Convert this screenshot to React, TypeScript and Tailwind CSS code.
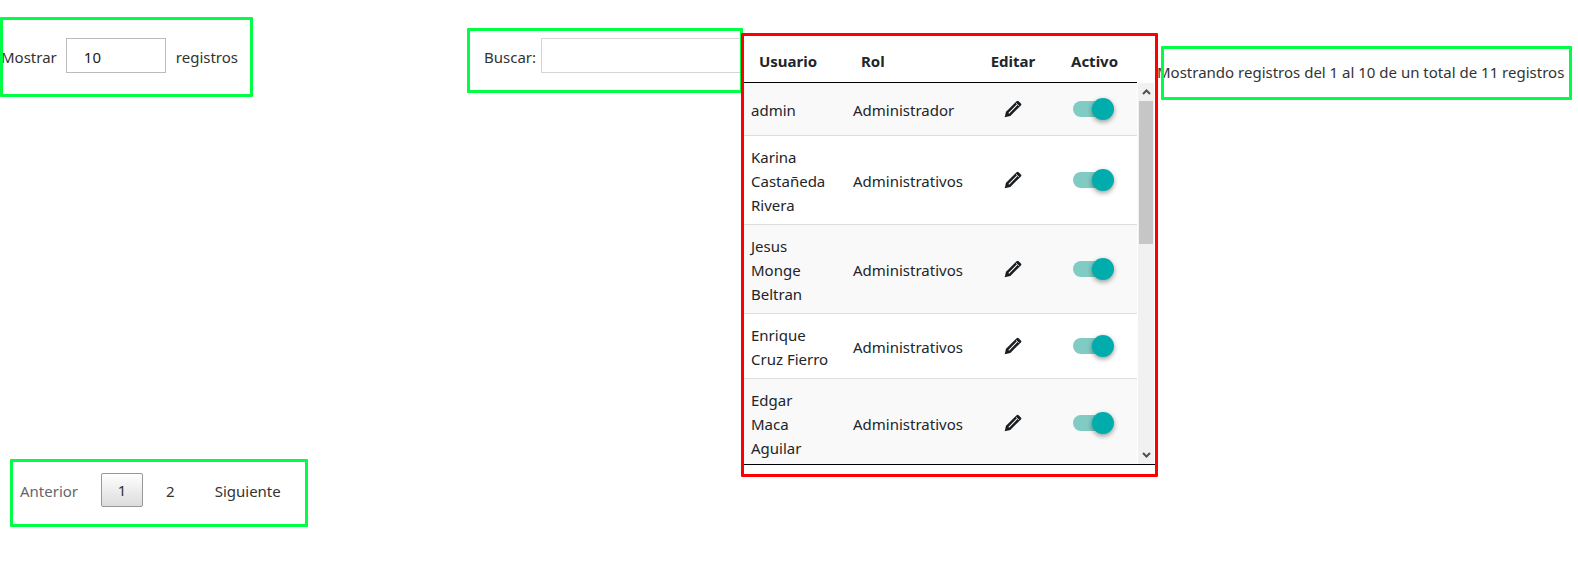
import type { ReactNode } from "react";

const rows = [
  { name: "admin", role: "Administrador", h: "h-[53px]", bg: "bg-[#f9f9f9]" },
  { name: "Karina\nCastañeda\nRivera", role: "Administrativos", h: "h-[89px]", bg: "bg-white" },
  { name: "Jesus\nMonge\nBeltran", role: "Administrativos", h: "h-[89px]", bg: "bg-[#f9f9f9]" },
  { name: "Enrique\nCruz Fierro", role: "Administrativos", h: "h-[65px]", bg: "bg-white" },
  { name: "Edgar\nMaca\nAguilar", role: "Administrativos", h: "h-[89px]", bg: "bg-[#f9f9f9]" },
];

/** Annotation frame: the coloured outline sits over whatever the box holds. */
function Frame({ className, color, children }: { className: string; color: string; children: ReactNode }) {
  return (
    <div className={`relative shrink-0 ${className}`}>
      {children}
      <div className={`pointer-events-none absolute inset-0 rounded-[1px] border-[3px] ${color}`} />
    </div>
  );
}

function Pencil() {
  return (
    <svg width="18" height="18" viewBox="0 0 16 16">
      <path
        fill="#1a1d20"
        d="M.6 15.4l1.2-5L11.2 1a1.3 1.3 0 0 1 1.8 0l2 2a1.3 1.3 0 0 1 0 1.8L5.6 14.2z"
      />
      <path d="M4.2 11.8l7.6-7.6" stroke="#fff" strokeWidth="0.9" fill="none" />
      <path d="M10.6 2.6l2.8 2.8" stroke="#fff" strokeWidth="0.6" fill="none" />
    </svg>
  );
}

function Toggle() {
  return (
    <div className="relative h-4 w-[36px] rounded-full bg-[#80cbc4]">
      <div className="absolute -top-[3px] -right-[5px] h-[22px] w-[22px] rounded-full bg-[#00acac] shadow-[0_2px_5px_rgba(0,0,0,0.4)]" />
    </div>
  );
}

function Scrollbar() {
  return (
    <div className="ml-px flex h-full w-4 flex-col bg-[#f1f1f1]">
      <div className="flex h-[18px] items-center justify-center">
        <svg width="9" height="6" viewBox="0 0 9 6" fill="none" stroke="#505050" strokeWidth="2">
          <path d="M1 5l3.5-3.5L8 5" />
        </svg>
      </div>
      <div className="mx-px h-[143px] bg-[#c6c6c6]" />
      <div className="flex-1" />
      <div className="flex h-[18px] items-center justify-center">
        <svg width="9" height="6" viewBox="0 0 9 6" fill="none" stroke="#505050" strokeWidth="2">
          <path d="M1 1l3.5 3.5L8 1" />
        </svg>
      </div>
    </div>
  );
}

export default function App() {
  return (
    <div className="flex h-[582px] w-[1578px] items-start overflow-hidden bg-white font-['Noto_Sans',sans-serif] text-[15px] text-[#333]">
      <div className="w-[741px] shrink-0">
        <div className="flex items-start">
          <Frame className="mt-[17px] h-[80px] w-[253px]" color="border-[#00ff44]">
            <div className="flex h-full items-center pl-[1px]">
              <span>Mostrar</span>
              <div className="-mt-[4px] ml-[9px] flex h-[35px] w-[100px] items-center border border-[#bbbbbb] pt-[4px] pl-[17px] text-[#222]">10</div>
              <span className="ml-[10px]">registros</span>
            </div>
          </Frame>
          <Frame className="mt-[28px] ml-[214px] h-[65px] w-[276px]" color="border-[#00ff44]">
            <div className="flex h-full items-start overflow-hidden pt-[10px] pl-[17px]">
              <span className="leading-[39px]">Buscar:</span>
              <div className="ml-[5px] h-[35px] flex-1 border border-r-0 border-[#d5d5d5]" />
            </div>
          </Frame>
        </div>
        <Frame className="mt-[362px] ml-[10px] h-[68px] w-[298px]" color="border-[#00ff44]">
          <div className="flex h-full items-center pb-[7px] pl-[10px]">
            <span className="mt-[4px] text-[#666]">Anterior</span>
            <div className="ml-[23px] flex h-[34px] w-[42px] items-center justify-center rounded-[2px] border border-[#979797] bg-gradient-to-b from-white to-[#dcdcdc] pt-px">1</div>
            <span className="mt-[4px] ml-[23px]">2</span>
            <span className="mt-[4px] ml-[40px]">Siguiente</span>
          </div>
        </Frame>
      </div>

      <Frame className="mt-[33px] h-[444px] w-[417px]" color="border-[#ff0000]">
        <div className="flex flex-col text-[#212529]">
          <div className="flex h-[50px] w-[396px] items-center border-b border-black pt-[8px] font-bold">
            <div className="w-[120px] pl-[18px]">Usuario</div>
            <div className="w-[122px]">Rol</div>
            <div className="w-[60px] text-center">Editar</div>
            <div className="w-[94px] pl-[28px]">Activo</div>
          </div>
          <div className="flex h-[382px] border-b border-black">
            <div className="h-full w-[396px] overflow-hidden">
              {rows.map((r) => (
                <div key={r.name} className={`flex items-center border-b border-[#dedede] ${r.h} ${r.bg}`}>
                  <div className="w-[112px] whitespace-pre-line pt-px pl-[10px] leading-6">{r.name}</div>
                  <div className="w-[130px] pt-[3px]">{r.role}</div>
                  <div className="flex w-[60px] justify-center">
                    <Pencil />
                  </div>
                  <div className="pl-[30px]">
                    <Toggle />
                  </div>
                </div>
              ))}
            </div>
            <Scrollbar />
          </div>
        </div>
      </Frame>

      <Frame className="mt-[46px] ml-[3px] h-[54px] w-[411px]" color="border-[#00ff44]">
        <div className="-ml-[4px] flex h-full items-center whitespace-nowrap pb-[2px]">
          Mostrando registros del 1 al 10 de un total de 11 registros
        </div>
      </Frame>
    </div>
  );
}
